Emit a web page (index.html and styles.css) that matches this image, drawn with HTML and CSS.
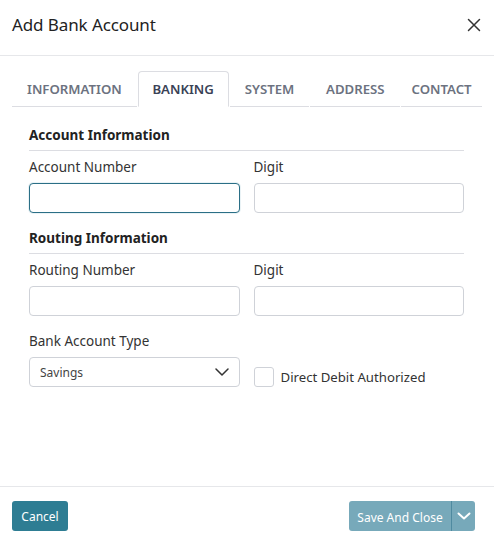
FILE: index.html
```html
<!DOCTYPE html>
<html>
<head>
<meta charset="utf-8">
<link rel="stylesheet" href="styles.css">
</head>
<body>
<div class="dialog">
  <header class="header">
    <h1 class="title">Add Bank Account</h1>
    <button class="close" aria-label="Close">
      <svg width="14" height="14" viewBox="0 0 14 14"><path d="M1.5 1.5L12.5 12.5M12.5 1.5L1.5 12.5" stroke="#333" stroke-width="1.5" fill="none" stroke-linecap="round"/></svg>
    </button>
  </header>
  <main class="body">
    <nav class="tabs">
      <div class="tab t-info">INFORMATION</div>
      <div class="tab t-bank active">BANKING</div>
      <div class="tab t-sys">SYSTEM</div>
      <div class="tab t-addr">ADDRESS</div>
      <div class="tab t-con">CONTACT</div>
    </nav>
    <section class="content">
      <h2 class="section-title">Account Information</h2>
      <div class="row">
        <div class="field">
          <label class="label">Account Number</label>
          <div class="input focused"></div>
        </div>
        <div class="field">
          <label class="label">Digit</label>
          <div class="input"></div>
        </div>
      </div>
      <h2 class="section-title second">Routing Information</h2>
      <div class="row">
        <div class="field">
          <label class="label">Routing Number</label>
          <div class="input"></div>
        </div>
        <div class="field">
          <label class="label">Digit</label>
          <div class="input"></div>
        </div>
      </div>
      <div class="row type-row">
        <div class="field">
          <label class="label">Bank Account Type</label>
          <div class="input select">
            <span class="select-text">Savings</span>
            <svg width="14" height="8" viewBox="0 0 14 8"><path d="M1 1L7 7L13 1" stroke="#333" stroke-width="1.5" fill="none" stroke-linecap="round" stroke-linejoin="round"/></svg>
          </div>
        </div>
        <div class="field check-field">
          <span class="checkbox"></span>
          <span class="check-label">Direct Debit Authorized</span>
        </div>
      </div>
    </section>
  </main>
  <footer class="footer">
    <button class="btn cancel">Cancel</button>
    <div class="split">
      <button class="btn save">Save And Close</button>
      <button class="btn caret">
        <svg width="14" height="8" viewBox="0 0 14 8"><path d="M1.5 1.5L7 6.5L12.5 1.5" stroke="#fff" stroke-width="2" fill="none" stroke-linecap="round" stroke-linejoin="round"/></svg>
      </button>
    </div>
  </footer>
</div>
</body>
</html>
```
FILE: styles.css
```css
* { box-sizing: border-box; }
html, body { margin: 0; padding: 0; background: #fff; }
body {
  font-family: "Noto Sans", "Open Sans", sans-serif;
  color: #333;
  width: 494px;
  height: 545px;
}
.dialog {
  height: 545px;
  display: flex;
  flex-direction: column;
}
.header {
  height: 56px;
  border-bottom: 1px solid #e6e7ea;
  display: flex;
  align-items: center;
  justify-content: space-between;
  padding: 0 13px 7px 12px;
}
.title {
  margin: 0;
  font-size: 17px;
  font-weight: 400;
  color: #222;
  letter-spacing: -0.1px;
}
.close {
  border: 0;
  background: none;
  padding: 0;
  display: flex;
  margin-top: 2px;
}
.body {
  flex: 1;
  padding: 15px 12px 0;
}
.tabs {
  display: flex;
  height: 36px;
  width: 470px;
}
.tab {
  font-size: 13.2px;
  font-weight: 600;
  color: #6c7280;
  display: flex;
  align-items: center;
  justify-content: center;
  border-bottom: 1px solid #dcdde2;
  margin-right: 1px;
}
.tab:last-child { margin-right: 0; }
.t-info { width: 125px; }
.t-bank { width: 91px; }
.t-sys { width: 80px; }
.t-addr { width: 90px; }
.t-con { width: 81px; }
.tab.active {
  color: #3a4256;
  border: 1px solid #dcdde2;
  border-bottom-color: #fff;
  border-radius: 4px 4px 0 0;
  background: #fff;
}
.content {
  padding: 19px 18px 0 17px;
}
.section-title {
  margin: 0;
  font-size: 13.5px;
  font-weight: 700;
  color: #222;
  height: 25px;
  line-height: 18px;
  border-bottom: 1px solid #dcdde2;
}
.section-title.second { margin-top: 16px; }
.row {
  display: flex;
  gap: 14px;
}
.field {
  flex: 1;
  display: flex;
  flex-direction: column;
}
.label {
  font-size: 13.5px;
  color: #333;
  height: 32px;
  line-height: 32px;
}
.input {
  height: 30px;
  border: 1px solid #cfd2d8;
  border-radius: 4px;
  background: #fff;
}
.input.focused {
  border-color: #2b6f86;
  box-shadow: 0 0 0 1px #eaf3f6;
}
.type-row { margin-top: 9px; }
.select {
  display: flex;
  align-items: center;
  justify-content: space-between;
  padding: 0 10px 0 10px;
  height: 30px;
}
.select-text { font-size: 12px; color: #444; }
.check-field {
  flex-direction: row;
  align-items: flex-end;
}
.checkbox {
  width: 20px;
  height: 20px;
  border: 1px solid #cfd2d8;
  border-radius: 3px;
  margin-right: 7px;
}
.check-label {
  font-size: 13.2px;
  color: #333;
  line-height: 20px;
}
.footer {
  height: 59px;
  border-top: 1px solid #e6e7ea;
  display: flex;
  justify-content: space-between;
  align-items: flex-start;
  padding: 14px 19px 0 12px;
}
.btn {
  border: 0;
  font-family: inherit;
  color: #fff;
  font-size: 12px;
  height: 30px;
  border-radius: 3px;
  padding: 0;
}
.cancel {
  width: 56px;
  background: #2e7d93;
}
.split { display: flex; }
.save {
  width: 102px;
  background: #77a9ba;
  border-radius: 3px 0 0 3px;
  padding-top: 2px;
}
.caret {
  width: 24px;
  background: #77a9ba;
  border-left: 1px solid #4f8aa0;
  border-radius: 0 3px 3px 0;
  display: flex;
  align-items: center;
  justify-content: center;
}
```
